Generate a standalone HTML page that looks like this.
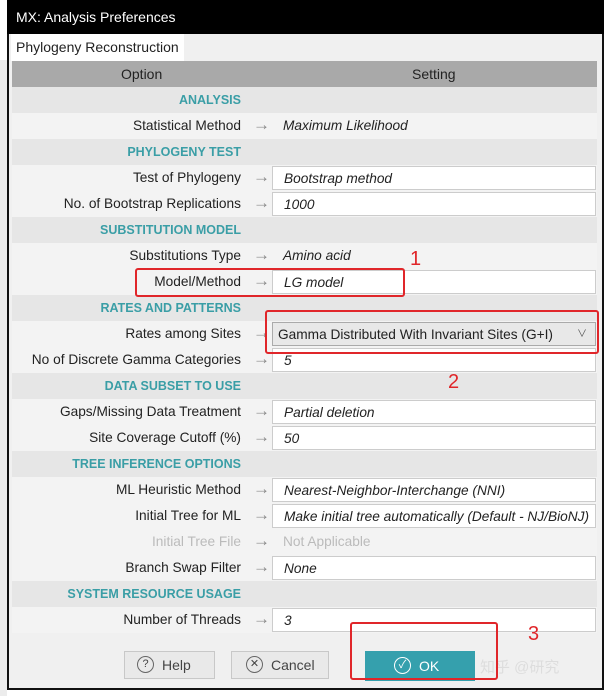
<!DOCTYPE html>
<html><head><meta charset="utf-8"><style>
*{margin:0;padding:0;box-sizing:border-box}
body{width:611px;height:696px;position:relative;background:#fff;font-family:"Liberation Sans","Noto Sans CJK SC",sans-serif;overflow:hidden;color:#222}
.a{position:absolute}
.win{left:7px;top:0;width:597px;height:690px;background:#f0f0f0;border:2px solid #111;border-top:none}
.title{left:7px;top:0;width:597px;height:34px;background:#000;color:#fff;font-size:14px;line-height:34px;padding-left:9px}
.tab{left:11px;top:34px;width:173px;height:27px;background:#fff;font-size:14px;line-height:26px;padding-left:5px}
.hdr{left:12px;top:61px;width:585px;height:26px;background:#a9a9a9;font-size:14px;line-height:26px}
.row{left:12px;width:585px;height:26px;background:#f3f3f3;font-size:13.7px;line-height:26px}
.sec{background:#e6e6e6}
.lab{position:absolute;right:356px;white-space:nowrap}
.sec .lab{color:#3a9ea6;font-weight:bold;font-size:12.5px}
.arr{position:absolute;left:241px;top:0;color:#888;font-size:17px;line-height:24px}
.val{position:absolute;left:260px;top:1px;width:324px;height:24px;line-height:23px;padding-left:11px;font-style:italic;white-space:nowrap;overflow:hidden}
.box{background:#fff;border:1px solid #ccc}
.btn{top:651px;height:28px;border:1px solid #c8c8c8;background:#e9e9e9;font-size:14px;line-height:26px;color:#444}
.ic{display:inline-block;width:17px;height:17px;border:1.5px solid #666;border-radius:50%;font-size:11px;line-height:14px;text-align:center;vertical-align:middle;margin-right:8px;margin-top:-3px}
.red{position:absolute;border:2.5px solid #e0262a;border-radius:3px}
.num{position:absolute;color:#e0262a;font-size:20px}
</style></head><body>
<div class="a" style="left:0;top:60px;width:7px;height:636px;background:#ececec"></div>
<div class="a win"></div>
<div class="a title">MX: Analysis Preferences</div>
<div class="a tab">Phylogeny Reconstruction</div>
<div class="a hdr"><span class="a" style="left:109px">Option</span><span class="a" style="left:400px">Setting</span></div>

<div class="a row sec" style="top:87px"><span class="lab">ANALYSIS</span></div>
<div class="a row" style="top:113px"><span class="lab">Statistical Method</span><span class="arr">→</span><span class="val">Maximum Likelihood</span></div>
<div class="a row sec" style="top:139px"><span class="lab">PHYLOGENY TEST</span></div>
<div class="a row" style="top:165px"><span class="lab">Test of Phylogeny</span><span class="arr">→</span><span class="val box">Bootstrap method</span></div>
<div class="a row" style="top:191px"><span class="lab">No. of Bootstrap Replications</span><span class="arr">→</span><span class="val box">1000</span></div>
<div class="a row sec" style="top:217px"><span class="lab">SUBSTITUTION MODEL</span></div>
<div class="a row" style="top:243px"><span class="lab">Substitutions Type</span><span class="arr">→</span><span class="val">Amino acid</span></div>
<div class="a row" style="top:269px"><span class="lab">Model/Method</span><span class="arr">→</span><span class="val box">LG model</span></div>
<div class="a row sec" style="top:295px"><span class="lab">RATES AND PATTERNS</span></div>
<div class="a row" style="top:321px"><span class="lab">Rates among Sites</span><span class="arr">→</span><span class="val box" style="font-style:normal;background:#e8e8e8;border-color:#aaa;padding-left:5px">Gamma Distributed With Invariant Sites (G+I)<span style="position:absolute;right:8px;font-size:10px;color:#555">∨</span></span></div>
<div class="a row" style="top:347px"><span class="lab">No of Discrete Gamma Categories</span><span class="arr">→</span><span class="val box">5</span></div>
<div class="a row sec" style="top:373px"><span class="lab">DATA SUBSET TO USE</span></div>
<div class="a row" style="top:399px"><span class="lab">Gaps/Missing Data Treatment</span><span class="arr">→</span><span class="val box">Partial deletion</span></div>
<div class="a row" style="top:425px"><span class="lab">Site Coverage Cutoff (%)</span><span class="arr">→</span><span class="val box">50</span></div>
<div class="a row sec" style="top:451px"><span class="lab">TREE INFERENCE OPTIONS</span></div>
<div class="a row" style="top:477px"><span class="lab">ML Heuristic Method</span><span class="arr">→</span><span class="val box">Nearest-Neighbor-Interchange (NNI)</span></div>
<div class="a row" style="top:503px"><span class="lab">Initial Tree for ML</span><span class="arr">→</span><span class="val box">Make initial tree automatically (Default - NJ/BioNJ)</span></div>
<div class="a row" style="top:529px;color:#bbb"><span class="lab">Initial Tree File</span><span class="arr">→</span><span class="val" style="font-style:normal">Not Applicable</span></div>
<div class="a row" style="top:555px"><span class="lab">Branch Swap Filter</span><span class="arr">→</span><span class="val box">None</span></div>
<div class="a row sec" style="top:581px"><span class="lab">SYSTEM RESOURCE USAGE</span></div>
<div class="a row" style="top:607px"><span class="lab">Number of Threads</span><span class="arr">→</span><span class="val box">3</span></div>

<div class="a btn" style="left:124px;width:91px;padding-left:12px"><span class="ic">?</span>Help</div>
<div class="a btn" style="left:231px;width:98px;padding-left:14px"><span class="ic">✕</span>Cancel</div>
<div class="a btn" style="left:365px;width:110px;background:#35a0ad;border-color:#35a0ad;color:#fff;padding-left:28px;height:30px;line-height:28px"><span class="ic" style="border-color:#fff;color:#fff">✓</span>OK</div>
<div class="a" style="left:480px;top:656px;font-size:15px;color:#ddd">知乎 @研究</div>

<div class="red" style="left:135px;top:268px;width:270px;height:29px"></div>
<div class="num" style="left:410px;top:248px">1</div>
<div class="red" style="left:265px;top:310px;width:334px;height:44px"></div>
<div class="num" style="left:448px;top:371px">2</div>
<div class="red" style="left:350px;top:622px;width:148px;height:58px"></div>
<div class="num" style="left:528px;top:623px">3</div>
</body></html>
